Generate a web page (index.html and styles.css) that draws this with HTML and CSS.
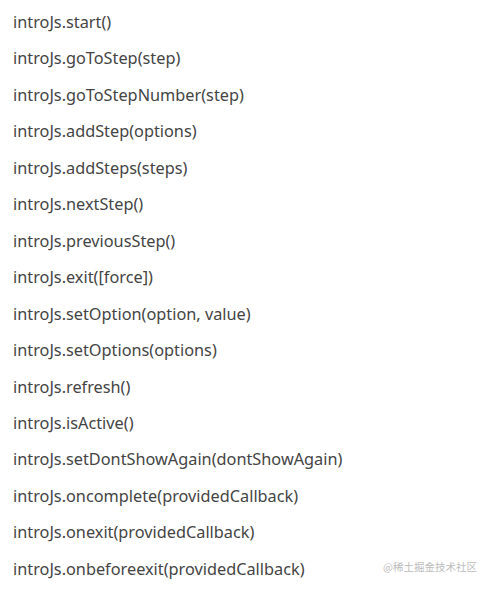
FILE: index.html
```html
<!DOCTYPE html>
<html>
<head>
<meta charset="utf-8">
<link rel="stylesheet" href="styles.css">
</head>
<body>
<ul class="api-list">
  <li>introJs.start()</li>
  <li>introJs.goToStep(step)</li>
  <li>introJs.goToStepNumber(step)</li>
  <li>introJs.addStep(options)</li>
  <li>introJs.addSteps(steps)</li>
  <li>introJs.nextStep()</li>
  <li>introJs.previousStep()</li>
  <li>introJs.exit([force])</li>
  <li>introJs.setOption(option, value)</li>
  <li>introJs.setOptions(options)</li>
  <li>introJs.refresh()</li>
  <li>introJs.isActive()</li>
  <li>introJs.setDontShowAgain(dontShowAgain)</li>
  <li>introJs.oncomplete(providedCallback)</li>
  <li>introJs.onexit(providedCallback)</li>
  <li>introJs.onbeforeexit(providedCallback)</li>
</ul>
<div class="watermark">@稀土掘金技术社区</div>
</body>
</html>
```
FILE: styles.css
```css
html, body {
  margin: 0;
  padding: 0;
  background: #fff;
}
body {
  width: 491px;
  height: 589px;
  overflow: hidden;
  position: relative;
  font-family: "Noto Sans", "Open Sans", sans-serif;
}
.api-list {
  list-style: none;
  margin: 0;
  padding: 4px 0 0 13px;
}
.api-list li {
  font-size: 16.3px;
  line-height: 36.45px;
  color: #444;
  white-space: nowrap;
}
.watermark {
  position: absolute;
  left: 383px;
  top: 559px;
  font-family: "Noto Sans CJK SC", sans-serif;
  font-size: 10.5px;
  color: #bcbcbc;
}
```
